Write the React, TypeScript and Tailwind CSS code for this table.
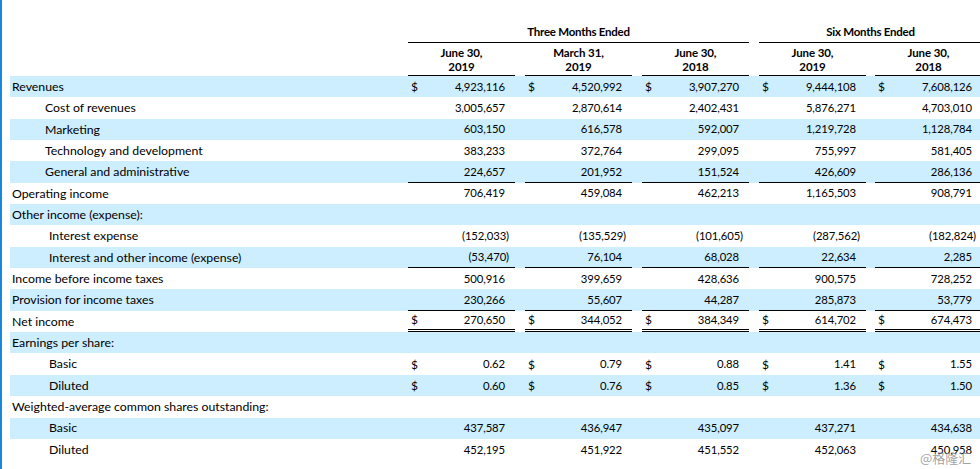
import React from "react";

type Row = {
  label: string;
  level: 0 | 1 | 2;
  values?: string[];
  dollar?: boolean;
  line?: "single" | "double";
};

const rows: Row[] = [
  { label: "Revenues", level: 0, dollar: true, values: ["4,923,116", "4,520,992", "3,907,270", "9,444,108", "7,608,126"] },
  { label: "Cost of revenues", level: 1, values: ["3,005,657", "2,870,614", "2,402,431", "5,876,271", "4,703,010"] },
  { label: "Marketing", level: 1, values: ["603,150", "616,578", "592,007", "1,219,728", "1,128,784"] },
  { label: "Technology and development", level: 1, values: ["383,233", "372,764", "299,095", "755,997", "581,405"] },
  { label: "General and administrative", level: 1, line: "single", values: ["224,657", "201,952", "151,524", "426,609", "286,136"] },
  { label: "Operating income", level: 0, values: ["706,419", "459,084", "462,213", "1,165,503", "908,791"] },
  { label: "Other income (expense):", level: 0 },
  { label: "Interest expense", level: 2, values: ["(152,033)", "(135,529)", "(101,605)", "(287,562)", "(182,824)"] },
  { label: "Interest and other income (expense)", level: 2, line: "single", values: ["(53,470)", "76,104", "68,028", "22,634", "2,285"] },
  { label: "Income before income taxes", level: 0, values: ["500,916", "399,659", "428,636", "900,575", "728,252"] },
  { label: "Provision for income taxes", level: 0, line: "single", values: ["230,266", "55,607", "44,287", "285,873", "53,779"] },
  { label: "Net income", level: 0, dollar: true, line: "double", values: ["270,650", "344,052", "384,349", "614,702", "674,473"] },
  { label: "Earnings per share:", level: 0 },
  { label: "Basic", level: 2, dollar: true, values: ["0.62", "0.79", "0.88", "1.41", "1.55"] },
  { label: "Diluted", level: 2, dollar: true, values: ["0.60", "0.76", "0.85", "1.36", "1.50"] },
  { label: "Weighted-average common shares outstanding:", level: 0 },
  { label: "Basic", level: 2, values: ["437,587", "436,947", "435,097", "437,271", "434,638"] },
  { label: "Diluted", level: 2, values: ["452,195", "451,922", "451,552", "452,063", "450,958"] },
];

const colMargins = ["", "ml-[10px]", "ml-[10px]", "ml-[10px]", "ml-[9px]"];
const levelPad = ["pl-[2px]", "pl-[35px]", "pl-[39px]"];

const headers = [
  ["June 30,", "2019"],
  ["March 31,", "2019"],
  ["June 30,", "2018"],
  ["June 30,", "2019"],
  ["June 30,", "2018"],
];

const font = "font-['Lato',_'Noto_Sans',_sans-serif]";

export default function App() {
  return (
    <div className={`relative w-[980px] h-[469px] overflow-hidden bg-white border-l-2 border-[#1a86dc] text-black ${font}`}>
      <div className="flex flex-col w-[1000px] ml-[8px]">
        {/* Group headers */}
        <div className="flex mt-[22px] text-[11.5px] tracking-[-0.25px] font-bold">
          <div className="w-[398px] shrink-0" />
          <div className="w-[341px] shrink-0 h-[21px] border-b border-black flex items-center justify-center pb-[1px]">
            Three Months Ended
          </div>
          <div className="w-[223px] shrink-0 ml-[10px] h-[21px] border-b border-black flex items-center justify-center pb-[1px]">
            Six Months Ended
          </div>
        </div>
        {/* Column headers */}
        <div className="flex text-[11.5px] tracking-[-0.1px] font-bold">
          <div className="w-[398px] shrink-0" />
          {headers.map((h, i) => (
            <div
              key={i}
              className={`${colMargins[i]} w-[107px] shrink-0 h-[33px] border-b border-black flex flex-col items-center pt-[3px] leading-[14px]`}
            >
              <span>{h[0]}</span>
              <span>{h[1]}</span>
            </div>
          ))}
        </div>
        {/* Body */}
        {rows.map((r, ri) => {
          const band = ri % 2 === 0 ? "bg-[#cceeff]" : "bg-white";
          const lineCls =
            r.line === "single"
              ? "border-b border-black"
              : r.line === "double"
              ? "border-b-[3px] border-double border-black"
              : "";
          return (
            <div key={ri} className={`flex h-[21.35px] ${band}`}>
              <div className={`w-[398px] shrink-0 flex items-center pt-[1px] text-[12.3px] ${levelPad[r.level]} whitespace-nowrap`}>
                {r.label}
              </div>
              {r.values &&
                r.values.map((v, ci) => {
                  const neg = v.startsWith("(");
                  return (
                    <div
                      key={ci}
                      className={`${colMargins[ci]} w-[107px] shrink-0 flex items-center justify-between pt-[1px] pl-[3px] pr-[10px] text-[11.3px] tracking-[-0.1px] ${lineCls}`}
                    >
                      <span className="text-[12px]">{r.dollar ? "$" : ""}</span>
                      <span className={neg ? "-mr-[4px]" : ""}>{v}</span>
                    </div>
                  );
                })}
            </div>
          );
        })}
      </div>
      <span className="absolute left-[918px] top-[451px] text-[13px] text-[#8a8a8a]/80 font-['Noto_Sans_CJK_SC',_sans-serif] leading-none">
        @格隆汇
      </span>
    </div>
  );
}
